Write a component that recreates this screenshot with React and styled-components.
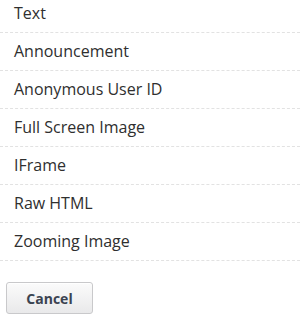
import styled, { createGlobalStyle } from "styled-components";

const GlobalStyle = createGlobalStyle`
  html, body {
    margin: 0;
    padding: 0;
    background: #ffffff;
    overflow: hidden;
  }
  body {
    font-family: "Open Sans", "Liberation Sans", sans-serif;
  }
`;

const Panel = styled.div`
  width: 300px;
  height: 323px;
  overflow: hidden;
  background: #fff;
`;

// list is scrolled a few px, first row peeks out from the top
const List = styled.ul`
  list-style: none;
  margin: -5px 0 0;
  padding: 0;
`;

const Item = styled.li`
  padding: 8px 14px 8px;
  font-size: 16px;
  line-height: 21px;
  color: #2f2f2f;
  border-bottom: 1px dashed #e2e2e2;
  cursor: pointer;
`;

const Footer = styled.div`
  padding: 21px 6px 0;
`;

const Button = styled.button`
  height: 32px;
  width: 87px;
  padding: 0 18px;
  font-family: "Open Sans", "Liberation Sans", sans-serif;
  font-size: 14px;
  font-weight: 700;
  color: #3b4351;
  background: linear-gradient(to bottom, #fbfbfb 0%, #e9e9ea 100%);
  border: 1px solid #c9c9cb;
  border-radius: 3px;
  box-shadow: inset 0 1px 0 #ffffff;
  cursor: pointer;
`;

const items = [
  "Text",
  "Announcement",
  "Anonymous User ID",
  "Full Screen Image",
  "IFrame",
  "Raw HTML",
  "Zooming Image",
];

const App = () => {
  return (
    <Panel>
      <GlobalStyle />
      <List>
        {items.map((name) => (
          <Item key={name}>{name}</Item>
        ))}
      </List>
      <Footer>
        <Button>Cancel</Button>
      </Footer>
    </Panel>
  );
};

export default App;
